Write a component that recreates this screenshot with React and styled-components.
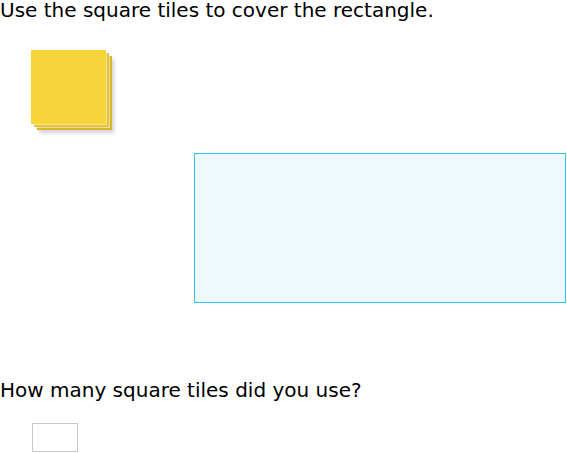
import React from "react";
import styled, { createGlobalStyle } from "styled-components";

const Global = createGlobalStyle`
  html, body { margin: 0; padding: 0; background: #fff; }
  body { font-family: "DejaVu Sans", Verdana, sans-serif; color: #000; }
`;

const Page = styled.div`
  width: 567px;
  height: 453px;
  display: flex;
  flex-direction: column;
  overflow: hidden;
`;

const Prompt = styled.div`
  font-size: 20px;
  line-height: 20px;
  white-space: nowrap;
  margin-top: ${(p) => p.$top || 0}px;
`;

const TileStack = styled.div`
  position: relative;
  width: 81px;
  height: 80px;
  margin: 30px 0 0 31px;
`;

const Tile = styled.div`
  position: absolute;
  left: ${(p) => p.$offset}px;
  top: ${(p) => p.$offset}px;
  width: 75px;
  height: 74px;
  background: ${(p) => p.$color};
  box-shadow: ${(p) => (p.$shadow ? "2px 3px 4px rgba(0,0,0,0.18)" : "none")};
  outline: ${(p) => (p.$edge ? "1px solid rgba(255,255,255,0.55)" : "none")};
`;

const Target = styled.div`
  box-sizing: border-box;
  width: 372px;
  height: 150px;
  margin: 23px 0 0 194px;
  background: #eef9fe;
  border: 1px solid #2ec3f0;
`;

const AnswerBox = styled.div`
  box-sizing: border-box;
  width: 46px;
  height: 29px;
  margin: 23px 0 0 32px;
  border: 1px solid #c8c8c8;
  background: #fff;
`;

export default function App() {
  return (
    <Page>
      <Global />
      <Prompt>Use the square tiles to cover the rectangle.</Prompt>
      <TileStack>
        <Tile $offset={6} $color="#d8b62a" $shadow />
        <Tile $offset={3} $color="#e5c232" $edge />
        <Tile $offset={0} $color="#f8d43b" $edge />
      </TileStack>
      <Target />
      <Prompt $top={77}>How many square tiles did you use?</Prompt>
      <AnswerBox />
    </Page>
  );
}
